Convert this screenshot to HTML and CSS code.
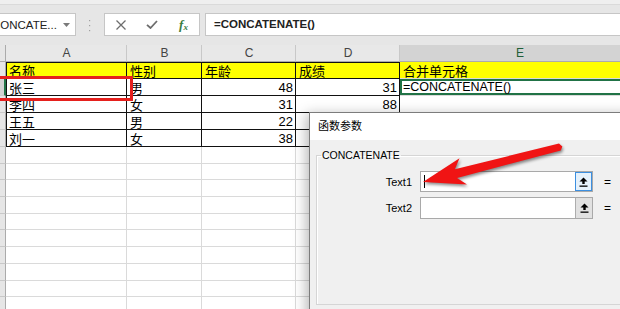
FILE: index.html
```html
<!DOCTYPE html>
<html lang="zh">
<head>
<meta charset="utf-8">
<link rel="stylesheet" href="styles.css">
</head>
<body>
<div class="toolbar">
  <div class="namebox">
    <span class="nb-text">CONCATE...</span>
    <svg class="nb-arrow" width="7" height="4" viewBox="0 0 7 4"><polygon points="0,0 7,0 3.5,4" fill="#7a7a7a"/></svg>
  </div>
  <svg class="grip" width="3" height="12" viewBox="0 0 3 12"><rect x="1" y="0" width="1.2" height="1.2" fill="#a0a0a0"/><rect x="1" y="5" width="1.2" height="1.2" fill="#a0a0a0"/><rect x="1" y="10" width="1.2" height="1.2" fill="#a0a0a0"/></svg>
  <div class="fxbox">
    <span class="fxcell"><svg width="10" height="10" viewBox="0 0 10 10"><path d="M0.5 0.5 L9.5 9.5 M9.5 0.5 L0.5 9.5" stroke="#6d6d6d" stroke-width="1.3" fill="none"/></svg></span>
    <span class="fxcell"><svg width="12" height="9" viewBox="0 0 12 9"><polyline points="1,4.8 4.5,8 11,1" stroke="#6d6d6d" stroke-width="1.8" fill="none"/></svg></span>
    <span class="fxcell fx"><i>f</i><i class="fx-x">x</i></span>
  </div>
  <div class="formula">=CONCATENATE()</div>
</div>

<div class="sheet">
  <div class="c corner"></div>
  <div class="c ch">A</div>
  <div class="c ch">B</div>
  <div class="c ch">C</div>
  <div class="c ch">D</div>
  <div class="c ch sel">E</div>

  <div class="c rh"></div>
  <div class="c y t tt tl">名称</div>
  <div class="c y t tt">性别</div>
  <div class="c y t tt">年龄</div>
  <div class="c y t tt">成绩</div>
  <div class="c y">合并单元格</div>

  <div class="c rh sel"></div>
  <div class="c t tl">张三</div>
  <div class="c t">男</div>
  <div class="c t n">48</div>
  <div class="c t n">31</div>
  <div class="c act">=CONCATENATE()</div>

  <div class="c rh"></div>
  <div class="c t tl">李四</div>
  <div class="c t">女</div>
  <div class="c t n">31</div>
  <div class="c t n">88</div>
  <div class="c"></div>

  <div class="c rh"></div>
  <div class="c t tl">王五</div>
  <div class="c t">男</div>
  <div class="c t n">22</div>
  <div class="c t n">76</div>
  <div class="c"></div>

  <div class="c rh"></div>
  <div class="c t tl">刘一</div>
  <div class="c t">女</div>
  <div class="c t n">38</div>
  <div class="c t n">90</div>
  <div class="c"></div>

  <div class="c rh"></div><div class="c"></div><div class="c"></div><div class="c"></div><div class="c"></div><div class="c"></div>
  <div class="c rh"></div><div class="c"></div><div class="c"></div><div class="c"></div><div class="c"></div><div class="c"></div>
  <div class="c rh"></div><div class="c"></div><div class="c"></div><div class="c"></div><div class="c"></div><div class="c"></div>
  <div class="c rh"></div><div class="c"></div><div class="c"></div><div class="c"></div><div class="c"></div><div class="c"></div>
  <div class="c rh"></div><div class="c"></div><div class="c"></div><div class="c"></div><div class="c"></div><div class="c"></div>
  <div class="c rh"></div><div class="c"></div><div class="c"></div><div class="c"></div><div class="c"></div><div class="c"></div>
  <div class="c rh"></div><div class="c"></div><div class="c"></div><div class="c"></div><div class="c"></div><div class="c"></div>
  <div class="c rh"></div><div class="c"></div><div class="c"></div><div class="c"></div><div class="c"></div><div class="c"></div>
  <div class="c rh"></div><div class="c"></div><div class="c"></div><div class="c"></div><div class="c"></div><div class="c"></div>
  <div class="c rh"></div><div class="c"></div><div class="c"></div><div class="c"></div><div class="c"></div><div class="c"></div>
</div>

<div class="highlight"></div>

<div class="dialog">
  <div class="dlg-title">函数参数</div>
  <div class="dlg-body">
    <fieldset class="group">
      <legend>CONCATENATE</legend>
      <div class="args">
        <span class="arg-label">Text1</span>
        <div class="arg-input focus">
          <span class="caret"></span>
          <span class="ref-btn"><svg width="9" height="10" viewBox="0 0 9 10"><polygon points="0.5,4.5 4.5,0.5 8.5,4.5 5.7,4.5 5.7,7 3.3,7 3.3,4.5" fill="#000"/><rect x="0.5" y="8.5" width="8" height="1.3" fill="#000"/></svg></span>
        </div>
        <span class="eq">=</span>

        <span class="arg-label">Text2</span>
        <div class="arg-input">
          <span class="ref-btn"><svg width="9" height="10" viewBox="0 0 9 10"><polygon points="0.5,4.5 4.5,0.5 8.5,4.5 5.7,4.5 5.7,7 3.3,7 3.3,4.5" fill="#000"/><rect x="0.5" y="8.5" width="8" height="1.3" fill="#000"/></svg></span>
        </div>
        <span class="eq">=</span>
      </div>
    </fieldset>
  </div>
</div>

<svg class="arrow" width="620" height="309" viewBox="0 0 620 309">
  <polygon points="423,182 459.5,158.3 454.9,169.2 559,143.6 562.3,146.4 560.8,150.4 457.1,177.9 467,184.5" fill="#f01414"/>
</svg>
</body>
</html>
```

FILE: styles.css
```css
html, body {
  margin: 0;
  padding: 0;
}
body {
  width: 620px;
  height: 309px;
  overflow: hidden;
  position: relative;
  background: #ffffff;
  font-family: "Liberation Sans", "Noto Sans CJK SC", sans-serif;
  color: #000;
}

/* ---------- formula toolbar ---------- */
.toolbar {
  height: 45px;
  box-sizing: border-box;
  padding-top: 13px;
  display: flex;
  align-items: flex-start;
  background: linear-gradient(#efefef 0, #efefef 4px, #dadada 4px, #dadada 5px, #e6e6e6 5px);
}
.namebox {
  width: 77px;
  height: 23px;
  margin-left: -1px;
  box-sizing: border-box;
  background: #fff;
  border: 1px solid #c6c6c6;
  display: flex;
  align-items: center;
  overflow: hidden;
}
.nb-text {
  flex: 1;
  font-size: 11.5px;
  white-space: nowrap;
  margin-left: -8px;
  color: #222;
}
.nb-arrow {
  margin-right: 5px;
}
.grip {
  margin: 7px 0 0 12px;
}
.fxbox {
  margin-left: 13px;
  width: 96px;
  height: 23px;
  box-sizing: border-box;
  background: #fff;
  border: 1px solid #c6c6c6;
  display: grid;
  grid-template-columns: 31px 32px 31px;
  align-items: center;
}
.fxcell {
  display: flex;
  justify-content: center;
  align-items: center;
}
.fx {
  font-family: "Liberation Serif", serif;
  color: #3a7d3e;
  font-size: 13px;
  font-weight: bold;
}
.fx-x {
  font-size: 9px;
  margin-top: 4px;
}
.formula {
  flex: 1;
  margin-left: 5px;
  height: 23px;
  box-sizing: border-box;
  background: #fff;
  border: 1px solid #c6c6c6;
  border-right: none;
  padding-left: 8px;
  font-size: 11.5px;
  font-weight: bold;
  line-height: 21px;
  color: #222;
}

/* ---------- sheet grid ---------- */
.sheet {
  display: grid;
  grid-template-columns: 6px 121px 75px 94px 104px 240px;
  grid-template-rows: 17px repeat(5, 17px) repeat(10, 16.7px);
}
.c {
  box-sizing: border-box;
  border-right: 1px solid #dadada;
  border-bottom: 1px solid #dadada;
  font-size: 13px;
  white-space: nowrap;
  overflow: hidden;
  padding: 0 2px 0 3px;
  display: flex;
  align-items: center;
}
.corner {
  background: #e6e6e6;
  border-right-color: #ababab;
  border-bottom-color: #ababab;
}
.ch {
  background: #e8e8e8;
  border-right-color: #c8c8c8;
  border-bottom-color: #ababab;
  justify-content: center;
  font-size: 12px;
  color: #444;
}
.ch.sel {
  background: #d3d3d3;
  color: #1f5f38;
}
.rh {
  background: #e6e6e6;
  border-right-color: #ababab;
  border-bottom-color: #c8c8c8;
  padding: 0;
}
.rh.sel {
  background: #d2d2d2;
  border-right: 2px solid #217346;
}
.y {
  background: #ffff00;
}
.t {
  border-right-color: #111;
  border-bottom-color: #111;
}
.tt {
  box-shadow: inset 0 1px 0 #111;
}
.tl {
  box-shadow: inset 1px 0 0 #111;
}
.tt.tl {
  box-shadow: inset 0 1px 0 #111, inset 1px 0 0 #111;
}
.n {
  justify-content: flex-end;
}
.act {
  box-shadow: inset 0 0 0 2px #217346;
  font-size: 12.5px;
}

/* ---------- overlays ---------- */
.highlight {
  position: absolute;
  left: -3px;
  top: 76px;
  width: 136px;
  height: 25px;
  box-sizing: border-box;
  border: 3px solid #e5201d;
}

.dialog {
  position: absolute;
  left: 309px;
  top: 112px;
  width: 340px;
  height: 220px;
  border: 1px solid #7c7c7c;
  background: #f0f0f0;
  box-shadow: -3px 2px 12px rgba(0, 0, 0, 0.28);
}
.dlg-title {
  height: 27px;
  line-height: 27px;
  padding-left: 8px;
  background: #fff;
  font-size: 11px;
}
.dlg-body {
  padding: 9px 0 0 6px;
}
.group {
  margin: 0;
  padding: 10px 0 0 4px;
  width: 400px;
  height: 156px;
  box-sizing: border-box;
  border: 1px solid #d5d5d5;
  box-shadow: inset 1px 1px 0 #fff;
}
.group legend {
  padding: 0 1px;
  font-size: 10.5px;
  line-height: 12px;
}
.args {
  display: grid;
  grid-template-columns: 91px 173px auto;
  grid-template-rows: 21px 22px;
  column-gap: 8px;
  row-gap: 5px;
  align-items: center;
}
.arg-label {
  text-align: right;
  font-size: 11px;
}
.arg-input {
  align-self: stretch;
  background: #fff;
  border: 1px solid #a9a9a9;
  box-sizing: border-box;
  display: flex;
  align-items: center;
}
.caret {
  width: 1px;
  height: 13px;
  background: #000;
  margin-left: 3px;
}
.ref-btn {
  margin-left: auto;
  width: 17px;
  align-self: stretch;
  box-sizing: border-box;
  display: flex;
  align-items: center;
  justify-content: center;
  background: #e1e1e1;
  border-left: 1px solid #adadad;
}
.focus .ref-btn {
  background: #e5f1fb;
  border: 1px solid #3c8fe0;
}
.eq {
  font-size: 12px;
  margin-left: 3px;
}

.arrow {
  position: absolute;
  left: 0;
  top: 0;
  pointer-events: none;
  filter: drop-shadow(1px 2px 1.5px rgba(0, 0, 0, 0.45));
}
```
